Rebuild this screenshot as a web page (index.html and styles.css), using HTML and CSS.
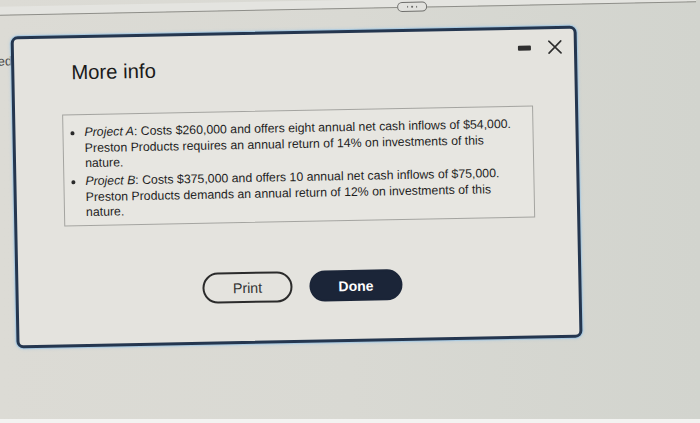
FILE: index.html
```html
<!DOCTYPE html>
<html lang="en">
<head>
<meta charset="utf-8">
<title>More info</title>
<link rel="stylesheet" href="styles.css">
</head>
<body>
<div class="scene">
  <div class="topbar">
    <div class="rule"></div>
    <div class="pill"><span class="dot"></span><span class="dot"></span><span class="dot"></span></div>
    <div class="rule rule-right"></div>
  </div>
  <div class="stage">
    <div class="side"><span class="side-text">ed</span></div>
    <section class="dialog">
      <header class="dialog-head">
        <h1 class="title">More info</h1>
        <div class="controls">
          <span class="minimize"></span>
          <svg class="close" width="14" height="14" viewBox="0 0 14 14" aria-hidden="true">
            <path d="M1 1 L13 13 M13 1 L1 13" stroke="#2e2e2e" stroke-width="1.6" fill="none" stroke-linecap="round"/>
          </svg>
        </div>
      </header>
      <div class="info">
        <ul class="info-list">
          <li><span class="item-text"><em>Project A</em>: Costs $260,000 and offers eight annual net cash inflows of $54,000. Preston Products requires an annual return of 14% on investments of this nature.</span></li>
          <li><span class="item-text"><em>Project B</em>: Costs $375,000 and offers 10 annual net cash inflows of $75,000. Preston Products demands an annual return of 12% on investments of this nature.</span></li>
        </ul>
      </div>
      <div class="actions">
        <button class="btn btn-print">Print</button>
        <button class="btn btn-done">Done</button>
      </div>
    </section>
  </div>
</div>
<div class="screen-edge"></div>
</body>
</html>
```

FILE: styles.css
```css
html, body {
  margin: 0;
  padding: 0;
}

body {
  width: 700px;
  height: 423px;
  overflow: hidden;
  background: linear-gradient(to right, #dcdbd5 0%, #d9d9d3 50%, #d2d4ce 100%);
  font-family: "Liberation Sans", Arial, sans-serif;
  color: #1f1f1f;
}

.scene {
  height: 419px;
  transform: rotate(-1.1deg);
}

.topbar {
  display: flex;
  align-items: center;
  height: 16px;
  background: linear-gradient(to bottom, #e4e4e0 0, #e4e4e0 8px, transparent 8px);
}

.rule {
  flex: 1;
  height: 1px;
  background: #8e8e89;
}

.rule-right {
  flex: 0 0 269px;
}

.pill {
  display: flex;
  align-items: center;
  justify-content: center;
  gap: 3px;
  width: 30px;
  height: 10px;
  box-sizing: border-box;
  border: 1.5px solid #6e6e6b;
  border-radius: 5px;
  background: #e2e2de;
}

.dot {
  width: 1.6px;
  height: 1.6px;
  border-radius: 50%;
  background: #6a6a68;
}

.stage {
  display: flex;
  align-items: flex-start;
  padding-top: 14px;
}

.side {
  width: 14px;
  display: flex;
  justify-content: flex-end;
  overflow: hidden;
  margin-top: 17px;
}

.side-text {
  white-space: nowrap;
  font-size: 13px;
  line-height: 15px;
  color: #4a4a4a;
  margin-right: -1px;
}

.dialog {
  width: 566px;
  height: 312px;
  box-sizing: border-box;
  border: 3px solid #24364f;
  border-radius: 7px;
  background: #e4e3de;
  box-shadow: 0 0 0 1px rgba(150, 195, 230, 0.55), 0 0 3px 1px rgba(150, 195, 230, 0.45);
  padding: 0 12px 0 47px;
}

.dialog-head {
  display: flex;
  justify-content: space-between;
  align-items: flex-start;
}

.title {
  margin: 22px 0 0 10px;
  font-size: 20.3px;
  line-height: 24px;
  font-weight: normal;
  color: #1a1a1a;
}

.controls {
  display: flex;
  align-items: flex-start;
  gap: 17px;
  margin-top: 11px;
}

.minimize {
  width: 13px;
  height: 4.5px;
  margin-top: 5px;
  background: #2f2f2f;
  border-radius: 1px;
}

.close {
  display: block;
}

.info {
  width: 471px;
  height: 112px;
  box-sizing: border-box;
  margin-top: 30px;
  border: 1px solid #a4a4a0;
  background: #e7e6e1;
  padding: 10px 8px 4px 0;
}

.info-list {
  list-style: none;
  margin: 0;
  padding-left: 7px;
  font-size: 12.3px;
  line-height: 15.5px;
  color: #1f1f1f;
}

.info-list li {
  display: grid;
  grid-template-columns: 14px 1fr;
}

.info-list li::before {
  content: "";
  width: 3.8px;
  height: 3.8px;
  margin-top: 6px;
  border-radius: 50%;
  background: #2a2a2a;
}

.info-list li + li {
  margin-top: 2.5px;
}

.actions {
  display: flex;
  gap: 17px;
  margin-top: 49px;
  padding-left: 137px;
}

.btn {
  height: 31px;
  box-sizing: border-box;
  border-radius: 16px;
  font-family: "Liberation Sans", Arial, sans-serif;
  font-size: 14.3px;
  padding: 0;
  cursor: pointer;
}

.btn-print {
  width: 90px;
  border: 2px solid #2b2b2b;
  background: transparent;
  color: #333333;
}

.btn-done {
  width: 93px;
  border: 2px solid #1b2538;
  background: #1b2538;
  color: #ffffff;
  font-weight: bold;
  font-size: 14px;
}

.screen-edge {
  height: 4px;
  background: #f3f3f1;
}
```
